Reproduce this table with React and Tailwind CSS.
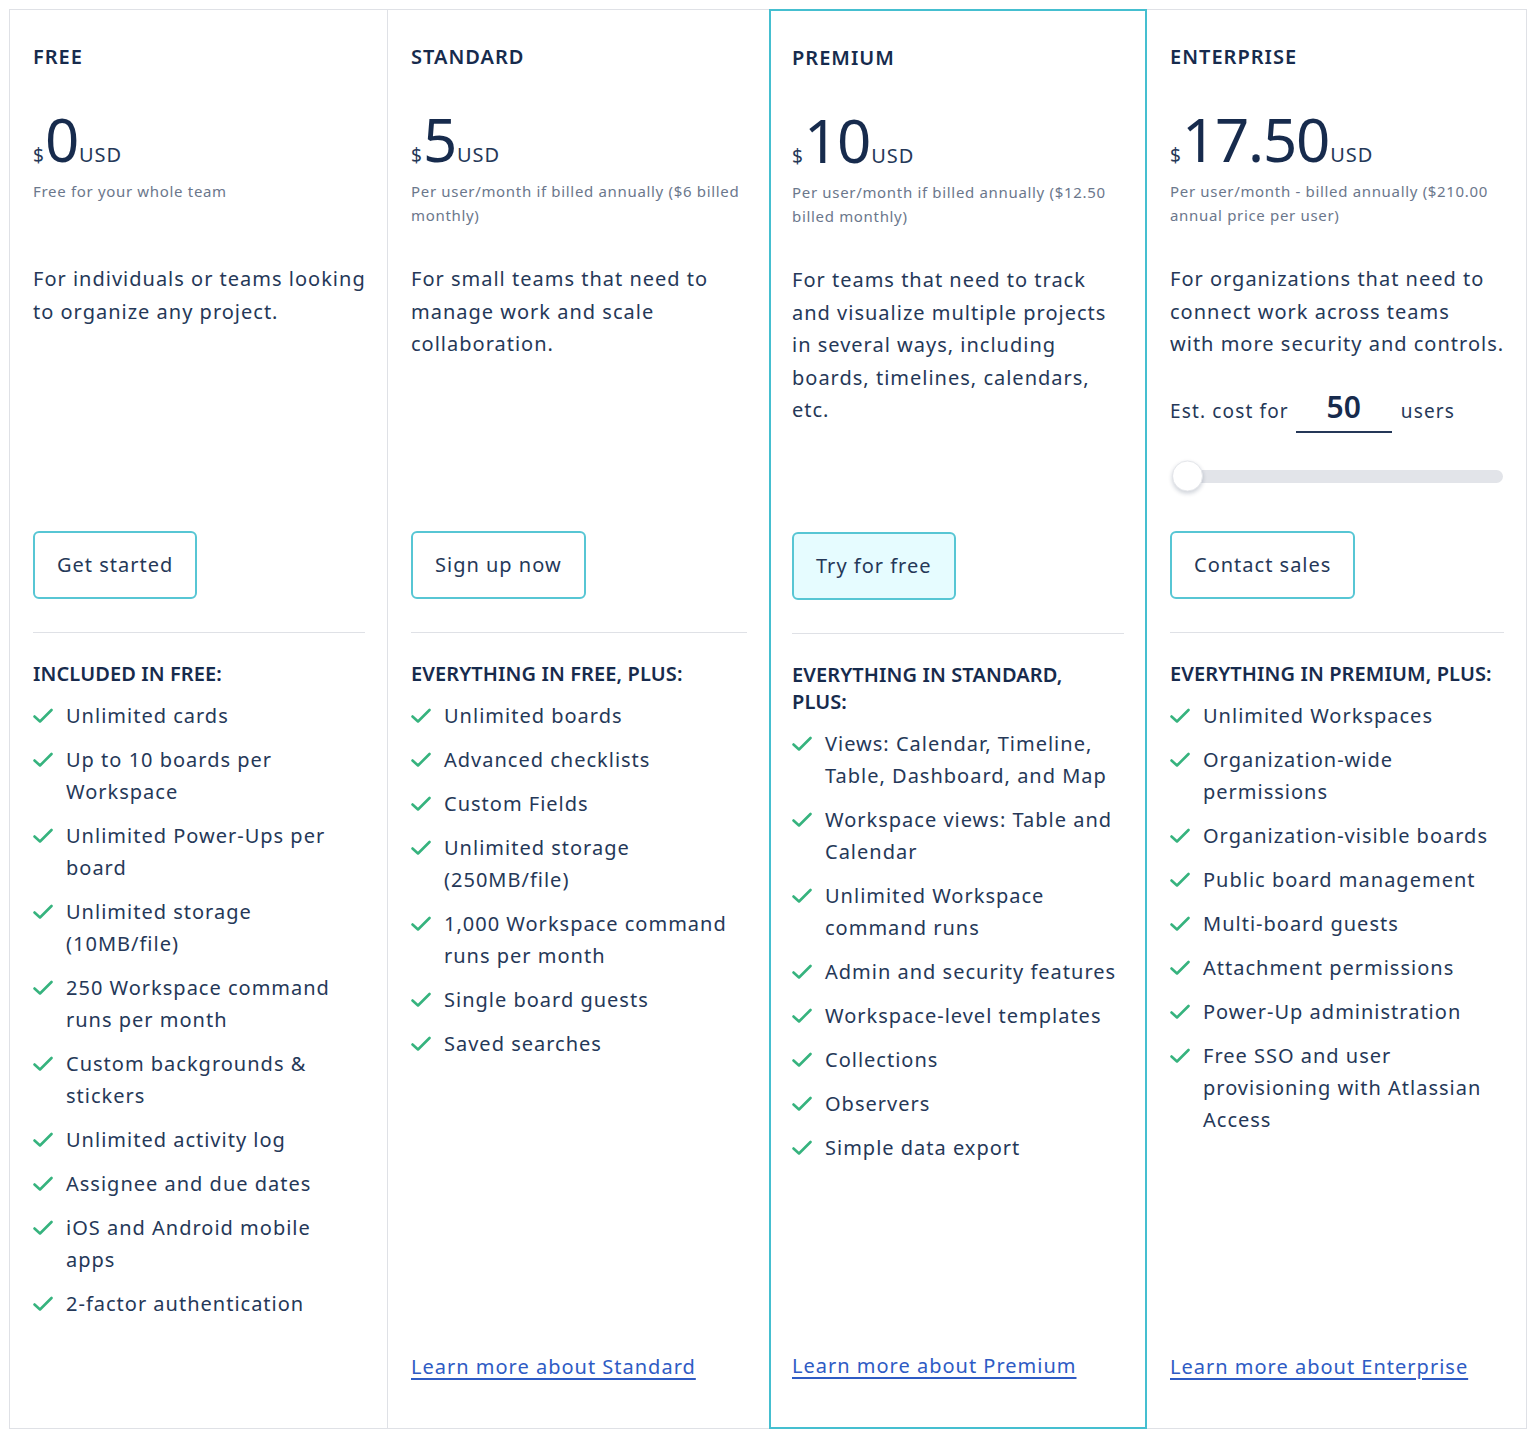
import React from 'react';

// Trello-style pricing table: four plan columns, Premium highlighted.

const PLANS = [
  {
    name: 'FREE',
    price: '0',
    note: ['Free for your whole team'],
    desc: ['For individuals or teams looking', 'to organize any project.'],
    cta: 'Get started',
    heading: ['INCLUDED IN FREE:'],
    features: [
      ['Unlimited cards'],
      ['Up to 10 boards per', 'Workspace'],
      ['Unlimited Power-Ups per', 'board'],
      ['Unlimited storage', '(10MB/file)'],
      ['250 Workspace command', 'runs per month'],
      ['Custom backgrounds &', 'stickers'],
      ['Unlimited activity log'],
      ['Assignee and due dates'],
      ['iOS and Android mobile', 'apps'],
      ['2-factor authentication'],
    ],
  },
  {
    name: 'STANDARD',
    price: '5',
    note: ['Per user/month if billed annually ($6 billed', 'monthly)'],
    desc: ['For small teams that need to', 'manage work and scale', 'collaboration.'],
    cta: 'Sign up now',
    heading: ['EVERYTHING IN FREE, PLUS:'],
    features: [
      ['Unlimited boards'],
      ['Advanced checklists'],
      ['Custom Fields'],
      ['Unlimited storage', '(250MB/file)'],
      ['1,000 Workspace command', 'runs per month'],
      ['Single board guests'],
      ['Saved searches'],
    ],
    link: 'Learn more about Standard',
  },
  {
    name: 'PREMIUM',
    price: '10',
    featured: true,
    note: ['Per user/month if billed annually ($12.50', 'billed monthly)'],
    desc: ['For teams that need to track', 'and visualize multiple projects', 'in several ways, including', 'boards, timelines, calendars,', 'etc.'],
    cta: 'Try for free',
    heading: ['EVERYTHING IN STANDARD,', 'PLUS:'],
    features: [
      ['Views: Calendar, Timeline,', 'Table, Dashboard, and Map'],
      ['Workspace views: Table and', 'Calendar'],
      ['Unlimited Workspace', 'command runs'],
      ['Admin and security features'],
      ['Workspace-level templates'],
      ['Collections'],
      ['Observers'],
      ['Simple data export'],
    ],
    link: 'Learn more about Premium',
  },
  {
    name: 'ENTERPRISE',
    price: '17.50',
    estimate: true,
    note: ['Per user/month - billed annually ($210.00', 'annual price per user)'],
    desc: ['For organizations that need to', 'connect work across teams', 'with more security and controls.'],
    cta: 'Contact sales',
    heading: ['EVERYTHING IN PREMIUM, PLUS:'],
    features: [
      ['Unlimited Workspaces'],
      ['Organization-wide', 'permissions'],
      ['Organization-visible boards'],
      ['Public board management'],
      ['Multi-board guests'],
      ['Attachment permissions'],
      ['Power-Up administration'],
      ['Free SSO and user', 'provisioning with Atlassian', 'Access'],
    ],
    link: 'Learn more about Enterprise',
  },
];

const Lines = ({ lines }) =>
  lines.map((l, i) => (
    <React.Fragment key={i}>
      {i > 0 && <br />}
      {l}
    </React.Fragment>
  ));

function Check() {
  return (
    <svg width="20" height="32" viewBox="0 0 20 32" className="shrink-0" aria-hidden="true">
      <path d="M1.5 16.5 L7 21.5 L18.5 10" fill="none" stroke="#36b37e" strokeWidth="2.6" strokeLinecap="round" strokeLinejoin="round" />
    </svg>
  );
}

function Estimate() {
  return (
    <div className="mt-[28px]">
      <div className="flex items-end text-[19px] tracking-[0.06em] text-[#253858]">
        <span className="pb-[10px] leading-[24px]">Est. cost for</span>
        <span className="ml-[7px] w-[96px] border-b-2 border-[#253858] pb-[6px] text-center text-[30px] font-semibold leading-[36px] tracking-normal text-[#172b4d]">50</span>
        <span className="ml-[9px] pb-[10px] leading-[24px]">users</span>
      </div>
      <div className="relative ml-[2px] mt-[37px] h-[13px] w-[331px] rounded-full bg-[#e2e4e9]">
        <span className="absolute left-0 top-1/2 h-[31px] w-[31px] -translate-y-1/2 rounded-full border border-[#e4e6ea] bg-white shadow-[0_2px_4px_rgba(9,30,66,0.2)]" />
      </div>
    </div>
  );
}

function PlanColumn({ plan, className }) {
  return (
    <div className={`flex flex-col whitespace-nowrap pt-[33px] pb-[45px] ${className}`}>
      <div className="h-[488px]">
        <div className="text-[20px] font-semibold leading-[28px] tracking-[0.05em] text-[#172b4d]">{plan.name}</div>
        <div className="mt-[38px] flex h-[60px] items-baseline text-[#172b4d]">
          <span className="text-[19px] leading-none text-[#253858]">$</span>
          <span className="ml-[1px] text-[60px] leading-[60px] tracking-[-0.02em]">{plan.price}</span>
          <span className="ml-[1px] text-[20px] leading-none tracking-[0.05em] text-[#253858]">USD</span>
        </div>
        <div className="mt-[10px] h-[48px] text-[15px] leading-[24px] tracking-[0.045em] text-[#6b778c]">
          <Lines lines={plan.note} />
        </div>
        <div className="mt-[36px] text-[20px] leading-[32.5px] tracking-[0.05em] text-[#253858]">
          <Lines lines={plan.desc} />
        </div>
        {plan.estimate && <Estimate />}
      </div>

      <button
        className={`self-start rounded-[6px] border-2 border-[#57c6d4] px-[22px] h-[68px] text-[20px] tracking-[0.05em] text-[#253858] ${
          plan.featured ? 'bg-[#e6fcff]' : 'bg-white'
        }`}
      >
        {plan.cta}
      </button>

      <div className="mt-[33px] border-t border-[#dfe1e6]" />

      <div className="mt-[27px] text-[20px] font-semibold leading-[27px] tracking-[0.005em] text-[#172b4d]">
        <Lines lines={plan.heading} />
      </div>

      <ul className="mt-[13px] flex flex-col gap-[12px]">
        {plan.features.map((f, i) => (
          <li key={i} className="flex gap-[13px] text-[20px] leading-[32px] tracking-[0.05em] text-[#253858]">
            <Check />
            <span>
              <Lines lines={f} />
            </span>
          </li>
        ))}
      </ul>

      {plan.link && (
        <a href="#" className="mt-auto self-start text-[20px] leading-[32px] tracking-[0.05em] text-[#2e5bc4] underline decoration-[1.5px] underline-offset-[4px]">
          {plan.link}
        </a>
      )}
    </div>
  );
}

export default function App() {
  return (
    <div className="min-h-screen bg-white pl-[9px] pt-[9px]" style={{ fontFamily: '"Noto Sans", Arial, sans-serif' }}>
      <div className="grid min-h-[1420px] w-[1518px] grid-cols-[379px_381px_378px_380px]">
        <PlanColumn plan={PLANS[0]} className="border border-[#dfe1e6] pl-[23px] pr-[22px]" />
        <PlanColumn plan={PLANS[1]} className="border-y border-[#dfe1e6] pl-[23px] pr-[22px]" />
        <PlanColumn plan={PLANS[2]} className="border-2 border-[#45bfd0] pl-[21px] pr-[21px]" />
        <PlanColumn plan={PLANS[3]} className="border-y border-r border-[#dfe1e6] pl-[23px] pr-[22px]" />
      </div>
    </div>
  );
}
